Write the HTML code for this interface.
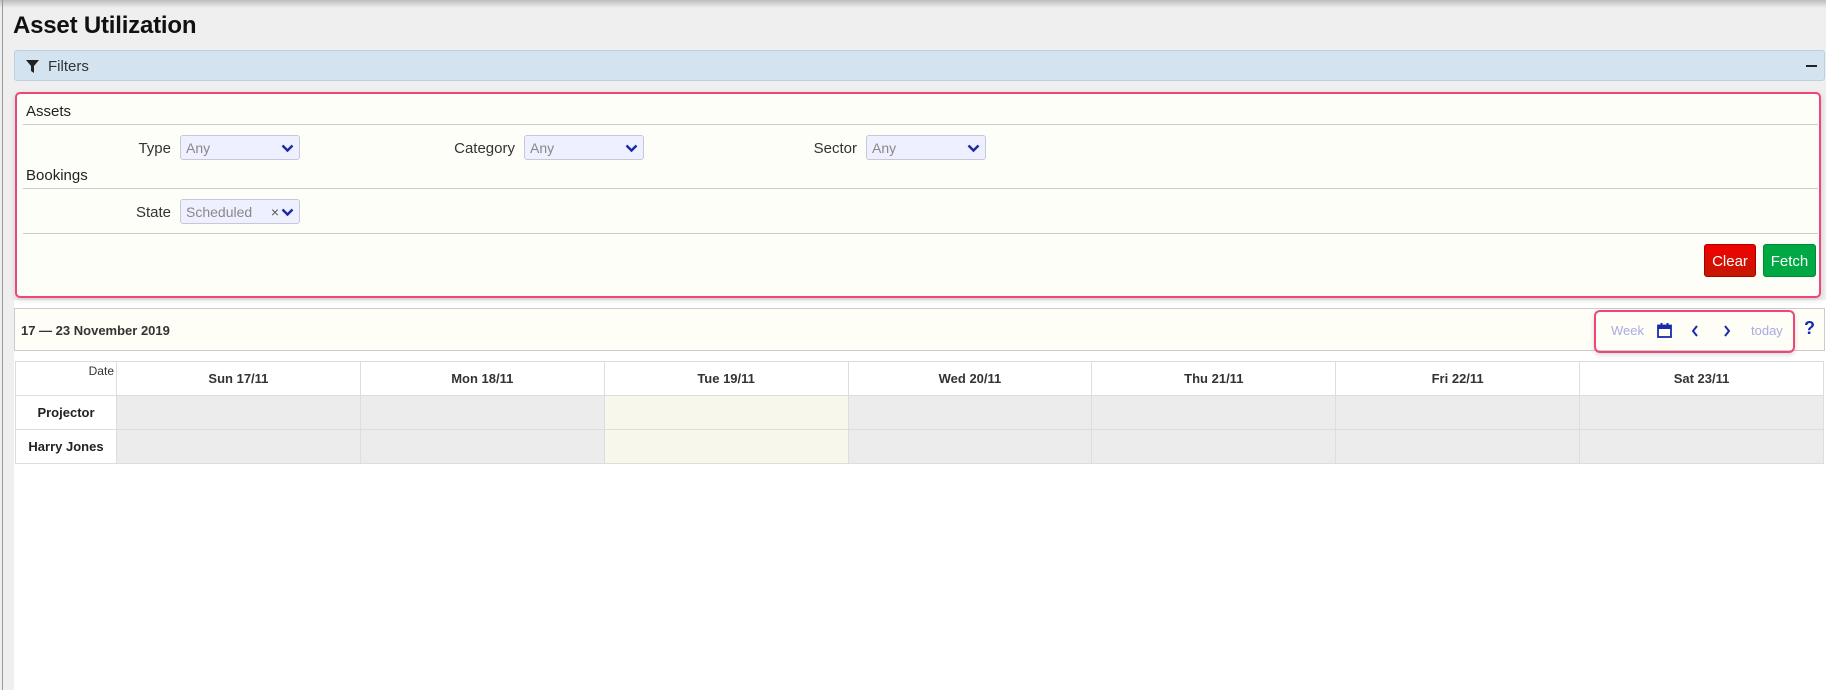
<!DOCTYPE html>
<html><head><style>
*{box-sizing:border-box;margin:0;padding:0}
body{width:1826px;height:690px;background:#efefef;font-family:"Liberation Sans",sans-serif;position:relative;overflow:hidden}
.abs{position:absolute}
.topsh{left:0;top:0;width:1826px;height:8px;background:linear-gradient(#bdbdbd,#efefef)}
.lstrip{left:2px;top:0;width:1px;height:690px;background:#999}
.white{left:14px;top:300px;width:1812px;height:390px;background:#fff}
h1{position:absolute;left:13px;top:12px;font-size:24px;font-weight:bold;color:#111;letter-spacing:-0.2px}
.fbar{left:14px;top:50px;width:1811px;height:31px;background:#d3e3f0;border:1px solid #bcd0e0;border-radius:3px}
.fbar span{position:absolute;left:33px;top:7px;font-size:15px;color:#333}
.pink{left:15px;top:92px;width:1806px;height:206px;background:#fefef8;border:2px solid #f0457a;border-radius:5px;box-shadow:0 2px 6px rgba(0,0,0,.15)}
.sec{font-size:15px;color:#222}
.hr{height:1px;background:#ccc}
.lab{font-size:15px;color:#333;text-align:right;width:150px}
.sel{height:25px;border:1px solid #c6c8d8;background:#eef0ff;border-radius:3px;font-size:14px;color:#888;padding:4px 5px;width:120px}
.btn{color:#fff;font-size:15px;border-radius:3px;text-align:center;line-height:33px;height:33px}
.tb{left:14px;top:308px;width:1811px;height:43px;background:#fefef6;border:1px solid #ccc}
.nav{left:1594px;top:310px;width:201px;height:43px;border:2px solid #f0457a;border-radius:6px;box-shadow:0 2px 5px rgba(0,0,0,.15)}
table{position:absolute;left:15px;top:361px;border-collapse:collapse;table-layout:fixed;width:1809px}
td,th{border:1px solid #ddd;font-size:13px;color:#333;text-align:center}
th{height:34px;background:#fff}
td{height:34px;background:#ececec}
td.n{background:#fff;font-weight:bold;color:#222}
td.t{background:#f7f7ec}
</style></head><body>
<div class="abs topsh"></div>
<div class="abs white"></div>
<div class="abs lstrip"></div>
<h1>Asset Utilization</h1>
<div class="abs fbar"><svg class="abs" style="left:11px;top:9px" width="13" height="13" viewBox="0 0 13 13"><path d="M0 0H13L8 6V13L5 11V6Z" fill="#222"/></svg><span>Filters</span><div class="abs" style="right:7px;top:14px;width:11px;height:2px;background:#222"></div></div>
<div class="abs pink">
<div class="abs sec" style="left:9px;top:9px">Assets</div>
<div class="abs hr" style="left:6px;top:30px;width:1795px"></div>
<div class="abs lab" style="left:4px;top:46px">Type</div>
<div class="abs sel" style="left:163px;top:41px">Any<svg class="abs" style="right:5px;top:8px" width="13" height="9"><path d="M1.5 1.5L6.5 6.5L11.5 1.5" stroke="#1a2aa0" stroke-width="2.4" fill="none"/></svg></div>
<div class="abs lab" style="left:348px;top:46px">Category</div>
<div class="abs sel" style="left:507px;top:41px">Any<svg class="abs" style="right:5px;top:8px" width="13" height="9"><path d="M1.5 1.5L6.5 6.5L11.5 1.5" stroke="#1a2aa0" stroke-width="2.4" fill="none"/></svg></div>
<div class="abs lab" style="left:690px;top:46px">Sector</div>
<div class="abs sel" style="left:849px;top:41px">Any<svg class="abs" style="right:5px;top:8px" width="13" height="9"><path d="M1.5 1.5L6.5 6.5L11.5 1.5" stroke="#1a2aa0" stroke-width="2.4" fill="none"/></svg></div>
<div class="abs sec" style="left:9px;top:73px">Bookings</div>
<div class="abs hr" style="left:6px;top:94px;width:1795px"></div>
<div class="abs lab" style="left:4px;top:110px">State</div>
<div class="abs sel" style="left:163px;top:105px">Scheduled<span class="abs" style="right:20px;top:4px;color:#555">×</span><svg class="abs" style="right:5px;top:8px" width="13" height="9"><path d="M1.5 1.5L6.5 6.5L11.5 1.5" stroke="#1a2aa0" stroke-width="2.4" fill="none"/></svg></div>
<div class="abs hr" style="left:6px;top:139px;width:1795px"></div>
<div class="abs btn" style="left:1687px;top:150px;width:52px;background:linear-gradient(#f20000,#c21a00);border:1px solid #a00">Clear</div>
<div class="abs btn" style="left:1746px;top:150px;width:53px;background:#00a844;border:1px solid #008a36">Fetch</div>
</div>
<div class="abs tb"><div class="abs" style="left:6px;top:14px;font-size:13px;font-weight:bold;color:#333">17 — 23 November 2019</div></div>
<div class="abs nav"></div>
<div class="abs" style="left:1611px;top:323px;font-size:13px;color:#a9a9e6">Week</div>
<svg class="abs" style="left:1657px;top:323px" width="15" height="15" viewBox="0 0 15 15"><rect x="1" y="2.5" width="13" height="11.5" fill="none" stroke="#1a2ab0" stroke-width="1.8"/><rect x="1" y="2.5" width="13" height="3.5" fill="#1a2ab0"/><rect x="3.5" y="0" width="2" height="3" fill="#1a2ab0"/><rect x="9.5" y="0" width="2" height="3" fill="#1a2ab0"/></svg>
<svg class="abs" style="left:1691px;top:325px" width="8" height="12"><path d="M6 1L2 6L6 11" stroke="#1a2ab0" stroke-width="2" fill="none"/></svg>
<svg class="abs" style="left:1723px;top:325px" width="8" height="12"><path d="M2 1L6 6L2 11" stroke="#1a2ab0" stroke-width="2" fill="none"/></svg>
<div class="abs" style="left:1751px;top:323px;font-size:13px;color:#a9a9e6">today</div>
<div class="abs" style="left:1804px;top:318px;font-size:18px;font-weight:bold;color:#1a2ab0">?</div>
<table>
<colgroup><col style="width:101px"><col><col><col><col><col><col><col></colgroup>
<tr><th style="text-align:right;vertical-align:top;font-weight:normal;padding:2px 2px 0 0;font-size:12px">Date</th><th>Sun 17/11</th><th>Mon 18/11</th><th>Tue 19/11</th><th>Wed 20/11</th><th>Thu 21/11</th><th>Fri 22/11</th><th>Sat 23/11</th></tr>
<tr><td class="n">Projector</td><td></td><td></td><td class="t"></td><td></td><td></td><td></td><td></td></tr>
<tr><td class="n">Harry Jones</td><td></td><td></td><td class="t"></td><td></td><td></td><td></td><td></td></tr>
</table>
</body></html>
